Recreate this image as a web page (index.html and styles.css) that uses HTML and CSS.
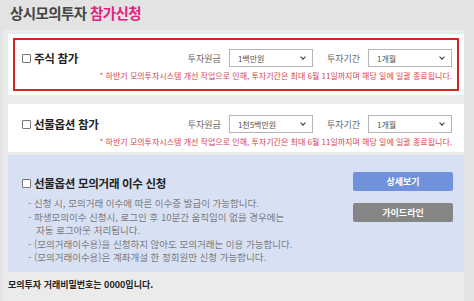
FILE: index.html
```html
<!DOCTYPE html>
<html lang="ko">
<head>
    <meta charset="UTF-8" />
    <meta name="viewport" content="width=device-width, initial-scale=1" />
    <title>상시모의투자 참가신청</title>
    <link rel="stylesheet" href="styles.css">
</head>
<body>

    <h1 class="title">상시모의투자 <span class="accent">참가신청</span></h1>

    <div class="panel">
        <div class="card">
            <div class="box box-red">
                <div class="row">
                    <label class="check"><span class="checkbox"></span>주식 참가</label>
                    <div class="fields">
                        <span class="field-label">투자원금</span>
                        <div class="select select-amount">1백만원<span class="chevron"></span></div>
                        <span class="field-label">투자기간</span>
                        <div class="select">1개월<span class="chevron"></span></div>
                    </div>
                </div>
                <p class="notice">* 하반기 모의투자시스템 개선 작업으로 인해, 투자기간은 최대 6월 11일까지며 해당 일에 일괄 종료됩니다.</p>
            </div>
        </div>

        <div class="card card-plain">
            <div class="row">
                <label class="check"><span class="checkbox"></span>선물옵션 참가</label>
                <div class="fields">
                    <span class="field-label">투자원금</span>
                    <div class="select select-amount">1천5백만원<span class="chevron"></span></div>
                    <span class="field-label">투자기간</span>
                    <div class="select">1개월<span class="chevron"></span></div>
                </div>
            </div>
            <p class="notice">* 하반기 모의투자시스템 개선 작업으로 인해, 투자기간은 최대 6월 11일까지며 해당 일에 일괄 종료됩니다.</p>
        </div>

        <div class="card card-blue">
            <div class="blue-main">
                <label class="check"><span class="checkbox"></span>선물옵션 모의거래 이수 신청</label>
                <ul class="info">
                    <li>- 신청 시, 모의거래 이수에 따른 이수증 발급이 가능합니다.</li>
                    <li>- 파생모의이수 신청시, 로그인 후 10분간 움직임이 없을 경우에는<br><span class="indent">자동 로그아웃 처리됩니다.</span></li>
                    <li>- (모의거래이수용)을 신청하지 않아도 모의거래는 이용 가능합니다.</li>
                    <li>- (모의거래이수용)은 계좌개설 한 정회원만 신청 가능합니다.</li>
                </ul>
            </div>
            <div class="buttons">
                <button class="btn btn-blue">상세보기</button>
                <button class="btn btn-gray">가이드라인</button>
            </div>
        </div>

        <p class="footer">모의투자 거래비밀번호는 0000입니다.</p>
    </div>

</body>
</html>
```

FILE: styles.css
```css
body {
    margin: 0;
    background-color: #e3e3e3;
    font-family: "Noto Sans CJK KR", "Noto Sans", sans-serif;
    color: #333;
}

.title {
    margin: 0;
    padding: 2px 10px 0 10px;
    height: 28px;
    font-size: 14.5px;
    font-weight: 700;
    color: #444;
    letter-spacing: -0.6px;
}

.accent {
    color: #e0237f;
}

.panel {
    margin-left: 3px;
    width: 461px;
    background-color: #ebebeb;
    padding: 4px 0 0 5px;
    box-sizing: border-box;
    height: 272px;
}

.card {
    background-color: #fff;
    width: 456px;
    box-sizing: border-box;
}

.card:first-child {
    padding: 4px 5px 4px 5px;
}

.box-red {
    border: 2px solid #d42424;
    height: 53px;
    box-sizing: border-box;
    padding: 9px 5px 0 7px;
}

.card-plain {
    margin-top: 9px;
    height: 48px;
    padding: 11px 12px 0 14px;
}

.row {
    display: flex;
    align-items: center;
}

.check {
    display: flex;
    align-items: center;
    font-size: 11.5px;
    font-weight: 700;
    color: #222;
    letter-spacing: -0.3px;
}

.checkbox {
    width: 7px;
    height: 7px;
    border: 1px solid #777;
    border-radius: 1px;
    background: #fff;
    margin-right: 3px;
}

.fields {
    margin-left: auto;
    display: flex;
    align-items: center;
}

.field-label {
    font-size: 9px;
    color: #666;
    margin-right: 8px;
}

.select {
    position: relative;
    width: 84px;
    height: 18px;
    box-sizing: border-box;
    border: 1px solid #b5b5b5;
    background: #fff;
    font-size: 8px;
    color: #555;
    padding: 3px 0 0 8px;
}

.select-amount {
    margin-right: 14px;
}

.chevron {
    position: absolute;
    right: 7px;
    top: 5px;
    width: 3px;
    height: 3px;
    border-right: 1.5px solid #333;
    border-bottom: 1.5px solid #333;
    transform: rotate(45deg);
}

.notice {
    margin: 3px 0 0 0;
    text-align: right;
    font-size: 8px;
    color: #d6454f;
    letter-spacing: 0;
}

.card-blue {
    margin-top: 3px;
    height: 117px;
    background-color: #d8e1f4;
    display: flex;
    padding: 17px 11px 0 14px;
}

.blue-main {
    flex: 1;
    padding-top: 3px;
}

.info {
    list-style: none;
    margin: 6px 0 0 6px;
    padding: 0;
    font-size: 9.5px;
    line-height: 13.5px;
    color: #7a7a7a;
}

.indent {
    padding-left: 8px;
}

.buttons {
    display: flex;
    flex-direction: column;
    gap: 12px;
}

.btn {
    width: 100px;
    height: 19px;
    border: none;
    border-radius: 2px;
    color: #fff;
    font-family: inherit;
    font-size: 9px;
    font-weight: 700;
    padding: 0;
}

.btn-blue {
    background-color: #6f92da;
}

.btn-gray {
    background-color: #858585;
}

.footer {
    margin: 6px 0 0 0;
    font-size: 9px;
    font-weight: 700;
    color: #222;
}
```
